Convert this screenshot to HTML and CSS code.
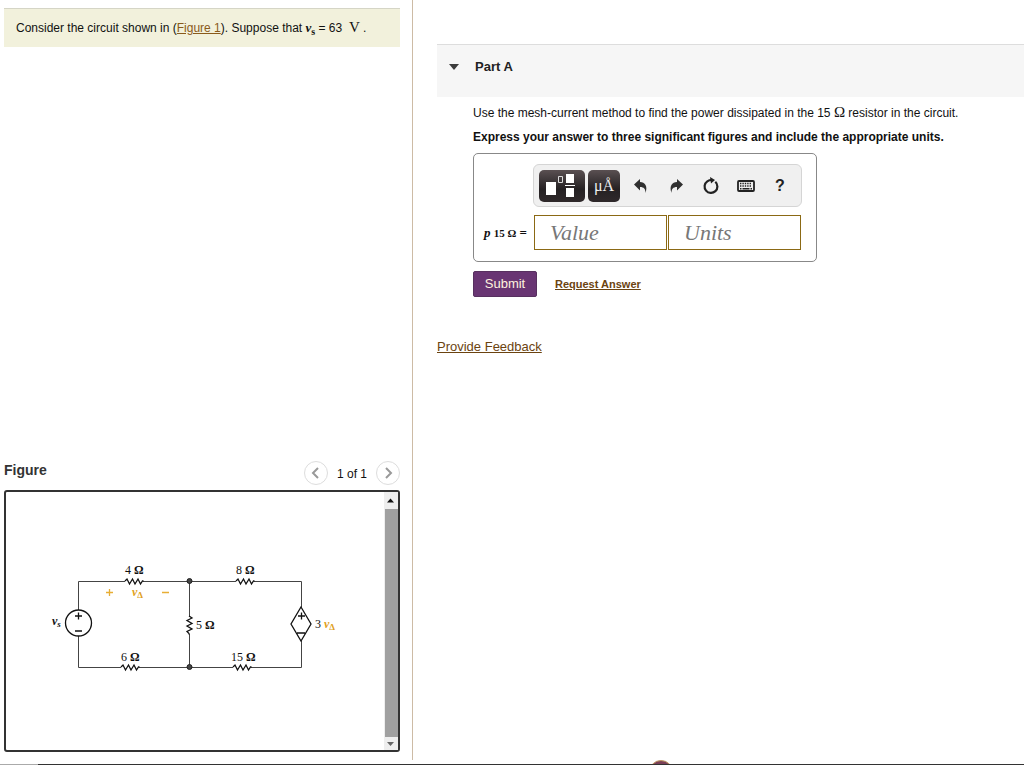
FILE: index.html
```html
<!DOCTYPE html>
<html lang="en">
<head>
<meta charset="utf-8">
<title>Part A</title>
<link rel="stylesheet" href="styles.css">
</head>
<body>
<div class="page">
  <aside class="side">
    <p class="intro">Consider the circuit shown in (<a href="#figure">Figure 1</a>). Suppose that <span class="math var">v</span><sub class="math">s</sub> = 63 &nbsp;<span class="math volt">V</span> .</p>
    <section class="figure" id="figure">
      <header class="figure-head">
        <h2>Figure</h2>
        <nav class="pager">
          <button type="button" aria-label="Previous figure"><svg width="10" height="12" viewBox="0 0 10 12"><path d="M7 1 2 6l5 5"/></svg></button>
          <span>1 of 1</span>
          <button type="button" aria-label="Next figure"><svg width="10" height="12" viewBox="0 0 10 12"><path d="m3 1 5 5-5 5"/></svg></button>
        </nav>
      </header>
      <div class="frame">
        <div class="canvas">
          <svg class="circuit" width="378" height="258" viewBox="6 492 378 258" role="img" aria-label="Circuit diagram">
            <g class="wire">
              <path d="M78.500 610V581.500H125M143 581.500H236M254 581.500H301.500V607M301.500 641V667.500H251M233 667.500H139M121 667.500H78.500V636M189.500 581V616M189.500 634V667"/>
            </g>
            <g class="part">
              <path d="M125 581l2-2 2.500 5 3-5 2.500 5 3-5 2.500 5 2-3h1"/>
              <path d="M236 581l2-2 2.500 5 3-5 2.500 5 3-5 2.500 5 2-3h1"/>
              <path d="M121 667l2-2 2.500 5 3-5 2.500 5 3-5 2.500 5 2-3h1"/>
              <path d="M233 667l2-2 2.500 5 3-5 2.500 5 3-5 2.500 5 2-3h1"/>
              <path d="M189 616l3 2-5 2.500 5 3-5 2.500 5 3-5 2.500 2 2v1"/>
              <circle cx="78.500" cy="623" r="13"/>
              <path d="M301 607l10 17-10 17-10-17zM75 616h7M78.500 612.500v7M75 631h7M298 616h7M301.500 612.500v7M297 633h8"/>
            </g>
            <circle class="node" cx="189.500" cy="581" r="2.500"/>
            <circle class="node" cx="189.500" cy="667" r="2.500"/>
            <g class="label">
              <text x="125" y="574">4 <tspan class="ohm">Ω</tspan></text>
              <text x="236" y="574">8 <tspan class="ohm">Ω</tspan></text>
              <text x="121" y="661">6 <tspan class="ohm">Ω</tspan></text>
              <text x="231" y="661">15 <tspan class="ohm">Ω</tspan></text>
              <text x="196" y="629">5 <tspan class="ohm">Ω</tspan></text>
              <text x="52" y="625"><tspan class="it">v</tspan><tspan class="it small" dy="2">s</tspan></text>
              <text x="315" y="628">3 <tspan class="it gold">v</tspan><tspan class="gold small" dy="2">Δ</tspan></text>
              <text x="132" y="596" class="gold"><tspan class="it">v</tspan><tspan class="small" dy="2">Δ</tspan></text>
            </g>
            <path class="sign" d="M106 592.500h7M109.500 589v7M162 592.500h7"/>
          </svg>
        </div>
        <div class="track" aria-hidden="true">
          <svg width="13" height="17" viewBox="0 0 13 17"><path d="M3 10.500 6.500 6.500 10 10.500z" fill="#111"/></svg>
          <div class="thumb"></div>
          <svg width="13" height="13" viewBox="0 0 13 13"><path d="M3 5h7L6.500 9z" fill="#666"/></svg>
        </div>
      </div>
    </section>
  </aside>

  <main class="main">
    <header class="part-head">
      <svg width="10" height="6" viewBox="0 0 10 6"><path d="M0 0h10L5 6z" fill="#3c3c3c"/></svg>
      <h1>Part A</h1>
    </header>
    <div class="part-body">
      <p class="question">Use the mesh-current method to find the power dissipated in the 15 <span class="math omega">Ω</span> resistor in the circuit.</p>
      <p class="hint">Express your answer to three significant figures and include the appropriate units.</p>
      <form class="answer" id="answer">
        <div class="toolbar">
          <button type="button" class="dark wide" aria-label="Templates"><svg width="46" height="32" viewBox="0 0 46 32"><path fill="#fff" d="M7 12h10v13H7zM27 4h8v9h-8zM26 15h10v1H26zM27 18h8v9h-8z"/><path fill="none" stroke="#ddd" d="M19.500 6.500h4v6h-4z"/></svg></button>
          <button type="button" class="dark" aria-label="Units symbols"><span class="math">μÅ</span></button>
          <button type="button" class="tool" aria-label="Undo"><svg width="14" height="14" viewBox="0 0 14 14"><path fill="#303030" d="M6 0v3C11 3 14 7 11.500 14 11.500 10 10 8 6 8v3.500L0 5.500z"/></svg></button>
          <button type="button" class="tool" aria-label="Redo"><svg width="14" height="14" viewBox="0 0 14 14"><path fill="#303030" d="M8 0v3C3 3 0 7 2.500 14 2.500 10 4 8 8 8v3.500l6-6z"/></svg></button>
          <button type="button" class="tool" aria-label="Reset"><svg width="16" height="18" viewBox="0 0 16 18"><path fill="none" stroke="#222" stroke-width="2.200" d="M4.300 4.300a6.400 6.400 0 1 0 8 .5M4.300 4.300C6 3.200 7 3 8.500 3"/><path fill="#222" d="m7 0 5 3-4 3.500z"/></svg></button>
          <button type="button" class="tool" aria-label="Keyboard"><svg width="18" height="12" viewBox="0 0 18 12"><rect x="1" y="1" width="16" height="10" rx="1" fill="#eee" stroke="#222" stroke-width="1.800"/><path stroke="#222" stroke-width="1.400" stroke-dasharray="1.400 1" d="M3 3.500h12M3 6h12"/><path stroke="#222" stroke-width="1.400" d="M3 8.700h1.500M5.500 8.700h7M13.500 8.700H15"/></svg></button>
          <button type="button" class="tool help" aria-label="Help">?</button>
        </div>
        <div class="entry">
          <label for="value" class="math"><i>p</i> <small>15 Ω</small> =</label>
          <input id="value" type="text" placeholder="Value">
          <input type="text" placeholder="Units" aria-label="Units">
        </div>
      </form>
      <div class="actions">
        <button type="submit" form="answer" class="submit">Submit</button>
        <a href="#request">Request Answer</a>
      </div>
    </div>
    <a class="feedback" href="#feedback">Provide Feedback</a>
    <svg class="badge" width="20" height="4" viewBox="0 0 20 4"><circle cx="10" cy="12" r="11.500" fill="#7b4058" stroke="#c09a60"/></svg>
  </main>
</div>
<footer class="edge"></footer>
</body>
</html>
```
FILE: styles.css
```css
* { box-sizing: border-box; }
body {
  margin: 0;
  min-height: 100vh;
  display: flex;
  flex-direction: column;
  background: #fff;
  color: #111;
  font: 12px/16px "Liberation Sans", Arial, sans-serif;
}
h1, h2, p { margin: 0; }
button { padding: 0; font: inherit; border: 0; cursor: pointer; }
a { color: #6b4310; }
.math { font-family: "Liberation Serif", "Times New Roman", serif; }

.page { flex: 1; display: grid; grid-template-columns: 413fr 611fr; }
.edge { height: 1px; background: linear-gradient(90deg, #aaa 38px, #333 38px); }

.side {
  display: flex;
  flex-direction: column;
  justify-content: space-between;
  margin-bottom: 4px;
  padding: 8px 12px 8px 4px;
  border-right: 1px solid #cdbba5;
}
.intro {
  padding: 10px 12px 11px;
  border-top: 1px solid #d5d5c6;
  background: #f2f1dc;
}
.intro a { color: #8a5a1a; }
.intro .var { font-size: 13px; font-style: italic; font-weight: bold; }
.intro sub { font-size: 10px; font-weight: bold; line-height: 0; }
.volt { font-size: 15px; line-height: 16px; }

.figure-head { display: flex; justify-content: space-between; margin-bottom: 5px; }
h2 { font-size: 14px; line-height: 18px; color: #333; }
.pager { display: flex; align-items: center; gap: 9px; }
.pager span { padding-top: 2px; }
.pager button {
  display: grid;
  place-items: center;
  width: 24px;
  height: 24px;
  border: 1px solid #ddd;
  border-radius: 50%;
  background: #fff;
}
.pager path { fill: none; stroke: #999; stroke-width: 2; }

.frame {
  display: flex;
  border: 2px solid #333;
  border-radius: 3px;
  background: #fff;
}
.canvas { flex: 1; min-width: 0; }
.circuit { display: block; max-width: 100%; }
.track { display: flex; flex-direction: column; width: 14px; background: #eee; }
.thumb { flex: 1; margin-left: 1px; background: #a0a0a0; }
.wire path { fill: none; stroke: #444; }
.part path, .part circle { fill: none; stroke: #111; stroke-width: 1.3; }
.node { fill: #444; stroke: #222; }
.label { font: 12px "Liberation Serif", serif; fill: #111; }
.ohm { font-weight: bold; }
.it { font-style: italic; font-weight: bold; }
.small { font-size: 9px; }
.label .gold { fill: #e0a11b; font-weight: bold; }
.sign { fill: none; stroke: #e8ae35; stroke-width: 1.3; }

.main { position: relative; padding: 44px 0 0 24px; }
.part-head {
  display: flex;
  align-items: center;
  gap: 16px;
  height: 53px;
  padding: 0 12px 8px;
  border-top: 1px solid #ddd;
  background: #f6f6f6;
}
h1 { font-size: 13px; line-height: 16px; color: #222; }
.part-body { padding: 8px 24px 0 36px; }
.question, .hint { line-height: 16px; }
.omega { font-size: 15px; line-height: 15px; }
.hint { margin-top: 8px; font-weight: bold; }
.answer {
  width: fit-content;
  margin-top: 8px;
  padding: 10px 14px 11px 10px;
  border: 1px solid #888;
  border-radius: 5px;
}
.toolbar {
  display: flex;
  align-items: center;
  margin: 0 0 8px 49px;
  padding: 5px;
  padding-right: 4px;
  height: 43px;
  border: 1px solid #d5d5d5;
  border-radius: 6px;
  background: #f0f0f0;
}
.dark {
  width: 32px;
  height: 32px;
  margin-right: 3px;
  border-radius: 5px;
  background: linear-gradient(#5a5052, #252123 60%, #2f292b);
  color: #eee;
  font-size: 16px;
}
.wide { width: 46px; }
.dark svg { display: block; }
.tool { display: grid; place-items: center; width: 35px; height: 30px; background: none; }
.help { width: 34px; font-size: 16px; font-weight: bold; color: #222; }
.entry { display: flex; align-items: center; }
.entry label { width: 50px; font-size: 13px; font-weight: bold; white-space: nowrap; }
.entry small { font-size: 11px; }
.entry input {
  width: 133px;
  height: 35px;
  margin-right: 1px;
  padding: 0 15px;
  border: 1px solid #8b6914;
  background: #fff;
  font: italic 22px "Liberation Serif", "Times New Roman", serif;
}
.entry input::placeholder { color: #777; opacity: 1; }
.actions { display: flex; align-items: center; gap: 18px; margin-top: 9px; }
.actions a { font-size: 11px; font-weight: bold; }
.submit {
  width: 64px;
  height: 26px;
  border: 1px solid #57305f;
  border-radius: 2px;
  background: #693573;
  color: #fff3df;
  font-size: 13px;
}
.feedback { display: inline-block; margin-top: 42px; font-size: 13px; }
.badge { position: absolute; left: 39%; bottom: 0; }
```
